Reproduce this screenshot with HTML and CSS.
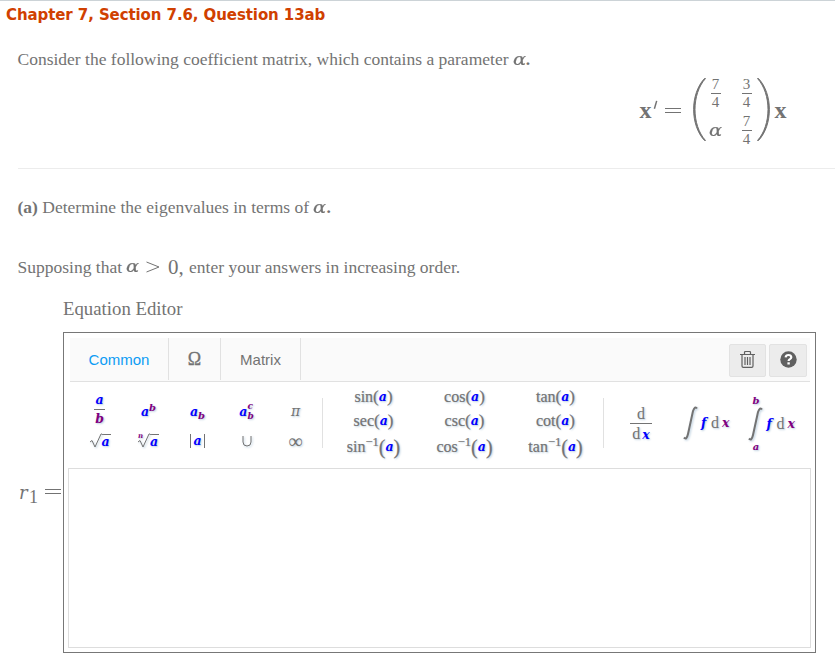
FILE: index.html
```html
<!DOCTYPE html>
<html lang="en">
<head>
  <meta charset="UTF-8">
  <meta name="viewport" content="width=device-width, initial-scale=1.0">
  <title>Chapter 7, Section 7.6, Question 13ab</title>
  <link rel="stylesheet" href="styles.css">
</head>
<body>
  <h1>Chapter 7, Section 7.6, Question 13ab</h1>
  <div class="question">
    <p class="intro">Consider the following coefficient matrix, which contains a parameter <span class="alpha">α</span><b>.</b></p>
    <div class="equation">
      <b class="vec">x</b><svg class="prime" width="13" height="10" viewBox="0 0 13 10"><path d="M4 .5L1.500 9"/></svg>
      <svg class="equals" width="16" height="7" viewBox="0 0 16 7"><path d="M0 1.5h16M0 5.5h16"/></svg>
      <svg class="paren" width="14" height="64" viewBox="0 0 14 64"><path d="M12.5 .5C-1.5 16-1.5 47 12.5 62.500L11.500 62.500C-3 47-3 16 11.500.5z" transform="translate(1 0)"/></svg>
      <div class="matrix">
        <span class="frac"><span>7</span><span>4</span></span>
        <span class="frac"><span>3</span><span>4</span></span>
        <span class="alpha">α</span>
        <span class="frac"><span>7</span><span>4</span></span>
      </div>
      <svg class="paren right" width="14" height="64" viewBox="0 0 14 64"><path d="M12.5 .5C-1.5 16-1.5 47 12.5 62.500L11.500 62.500C-3 47-3 16 11.500.5z" transform="translate(1 0)"/></svg>
      <b class="vec last">x</b>
    </div>
  </div>

  <div class="question">
    <p class="part"><b>(a)</b> Determine the eigenvalues in terms of <span class="alpha">α</span><b>.</b></p>
    <p class="suppose"><span>Supposing that</span> <span class="alpha">α</span><svg class="greater" width="14" height="12" viewBox="0 0 14 12"><path d="M.5 1L13 6 .5 11"/></svg><span class="zero">0,</span> <span>enter your answers in increasing order.</span></p>
  </div>

  <div class="answer">
    <div class="label"><i>r</i><sub>1</sub><svg class="equals" width="16" height="7" viewBox="0 0 16 7"><path d="M0 1.5h16M0 5.5h16"/></svg></div>
    <div class="editor-wrap">
      <div class="caption">Equation Editor</div>
      <div class="editor">
        <div class="toolbar">
          <div class="tab active">Common</div>
          <div class="tab omega">Ω</div>
          <div class="tab matrix-tab">Matrix</div>
          <div class="buttons">
            <div class="btn">
              <svg width="15" height="17" viewBox="0 0 15 17"><path class="line" d="M0 3.500h15M4.500 3V1.500q0-1 1-1h4q1 0 1 1V3M2 4v11q0 1.300 1.300 1.300h8.400q1.300 0 1.300-1.300V4M5 6v8M7.500 6v8M10 6v8"/></svg>
            </div>
            <div class="btn help">
              <svg width="17" height="17" viewBox="0 0 17 17"><circle cx="8.500" cy="8.500" r="8.200"/><path class="mark" d="M5.600 6.400Q6 4 8.500 4T11.300 6.200Q11.300 7.300 9.900 8.100 8.600 8.800 8.600 10"/><path class="dot" d="M7.400 11.300h2.400v2.200H7.400z"/></svg>
            </div>
          </div>
        </div>

        <div class="palette">
          <div class="group symbols">
            <div class="cell stack"><span class="v">a</span><span class="w over">b</span></div>
            <div class="cell low"><span class="v">a</span><span class="w sup">b</span></div>
            <div class="cell low"><span class="v">a</span><span class="w sub">b</span></div>
            <div class="cell low"><span class="v">a</span><span class="w both"><span>c</span><span>b</span></span></div>
            <div class="cell sym pi">π</div>
            <div class="cell"><svg class="root" width="13" height="16" viewBox="0 0 13 16"><path d="M1 9l2-1.500 3 6.500L12 1h1"/></svg><span class="v rooted">a</span></div>
            <div class="cell nth"><span class="w index">n</span><svg class="root" width="13" height="16" viewBox="0 0 13 16"><path d="M1 9l2-1.500 3 6.500L12 1h1"/></svg><span class="v rooted">a</span></div>
            <div class="cell"><span class="bar"></span><span class="v">a</span><span class="bar"></span></div>
            <div class="cell"><svg class="union" width="10" height="11" viewBox="0 0 10 11"><path d="M1 0v6q0 4 4 4t4-4V0"/></svg></div>
            <div class="cell sym infinity">∞</div>
          </div>
          <div class="group trig">
            <div class="cell">sin<span class="p">(</span><span class="v">a</span><span class="p">)</span></div>
            <div class="cell">cos<span class="p">(</span><span class="v">a</span><span class="p">)</span></div>
            <div class="cell">tan<span class="p">(</span><span class="v">a</span><span class="p">)</span></div>
            <div class="cell">sec<span class="p">(</span><span class="v">a</span><span class="p">)</span></div>
            <div class="cell">csc<span class="p">(</span><span class="v">a</span><span class="p">)</span></div>
            <div class="cell">cot<span class="p">(</span><span class="v">a</span><span class="p">)</span></div>
            <div class="cell">sin<span class="inv">−1</span><span class="p big">(</span><span class="v">a</span><span class="p big">)</span></div>
            <div class="cell">cos<span class="inv">−1</span><span class="p big">(</span><span class="v">a</span><span class="p big">)</span></div>
            <div class="cell">tan<span class="inv">−1</span><span class="p big">(</span><span class="v">a</span><span class="p big">)</span></div>
          </div>
          <div class="group calculus">
            <div class="derivative"><span>d</span><span class="over">d <span class="v">x</span></span></div>
            <div class="integral">
              <svg class="int" width="15" height="34" viewBox="0 0 15 34"><path d="M14 2.500Q12-.5 10 5L5 28Q3.500 34.500 1 31.500"/></svg>
              <span class="v">f</span><span class="d">d</span><span class="w">x</span>
            </div>
            <div class="integral definite">
              <div class="limits">
                <span class="w">b</span>
                <svg class="int" width="15" height="34" viewBox="0 0 15 34"><path d="M14 2.500Q12-.5 10 5L5 28Q3.500 34.500 1 31.500"/></svg>
                <span class="w">a</span>
              </div>
              <span class="v">f</span><span class="d">d</span><span class="w">x</span>
            </div>
          </div>
        </div>
        <div class="input"></div>
      </div>
    </div>
  </div>
</body>
</html>
```

FILE: styles.css
```css
* {
  box-sizing: border-box;
}
body {
  margin: 0;
  height: 657px;
  overflow: hidden;
  border-top: 1px solid #ccd3d7;
  background: #fff;
  color: #737373;
  font-family: "Liberation Serif", serif;
  font-size: 17.5px;
}
h1 {
  margin: 0;
  padding: 4px 0 0 6px;
  height: 30px;
  color: #d04000;
  font: bold 15px/20px "DejaVu Sans", sans-serif;
  letter-spacing: -0.09px;
}
svg {
  display: block;
  flex: none;
  fill: none;
  stroke: #737373;
}
p {
  margin: 0;
  line-height: 24px;
  white-space: nowrap;
}
.question {
  margin-left: 17.5px;
}
.question:first-of-type {
  height: 138px;
  border-bottom: 1px solid #ececec;
}
.intro {
  padding-top: 16px;
}
.alpha {
  display: inline-block;
  width: 13px;
  font: italic 16px/20px "DejaVu Serif", serif;
  -webkit-text-stroke: 0.2px #737373;
  transform: scaleX(1.22);
  transform-origin: left;
}

/* matrix equation */
.equation {
  display: flex;
  align-items: center;
  height: 64px;
  margin: 7px 0 0 622px;
}
.vec {
  width: 13px;
  font-size: 24px;
  line-height: 22px;
}
.prime {
  width: 12px;
  margin-top: -10px;
  stroke-width: 1.6;
}
.paren {
  margin-left: 11px;
}
.paren path {
  fill: #737373;
  stroke-width: 1;
}
.paren.right {
  margin-left: 0;
  transform: scaleX(-1);
}
.last {
  margin-left: 4px;
}
.matrix {
  display: grid;
  grid-template-columns: 20px 30px;
  grid-template-rows: 37px 38px;
  column-gap: 6px;
  justify-items: center;
  align-items: center;
  height: 75px;
  margin: 4px -5px 0 0;
}
.frac {
  display: flex;
  flex-direction: column;
  text-align: center;
  width: 10px;
  font-size: 15px;
  line-height: 17px;
}
.frac span + span {
  border-top: 1px solid #737373;
}

.part {
  padding-top: 26px;
}
.suppose {
  display: flex;
  align-items: center;
  padding-top: 36px;
}
.suppose .alpha {
  margin-left: 4px;
}
.greater {
  margin: 0 8px 0 7px;
}
.zero {
  width: 21px;
  font-size: 21px;
}

/* answer row */
.answer {
  display: flex;
  margin-top: 18px;
}
.label {
  display: flex;
  width: 63px;
  padding: 183px 0 0 19px;
  height: 230px;
  font-size: 23px;
  line-height: 24px;
}
.label i {
  width: 11px;
  font: italic 18px/26px "DejaVu Serif", serif;
}
.label sub {
  width: 16px;
  margin-left: -1px;
  font-size: 18px;
  line-height: 34px;
}
.label .equals {
  margin-top: 8px;
}
.editor-wrap {
  width: 753px;
}
.caption {
  height: 35px;
  font-size: 18.8px;
  line-height: 24px;
}
.editor {
  height: 321px;
  padding: 5px 4px 4px;
  border: 1px solid #777;
}
.toolbar {
  display: flex;
  height: 44px;
  margin: 0 1px 0 2px;
  border-bottom: 1px solid #e1e1e1;
  background: #fafafa;
  font: 15px/43px "Liberation Sans", Arial, sans-serif;
}
.tab {
  width: 99px;
  height: 42px;
  border-right: 1px solid #e1e1e1;
  text-align: center;
}
.tab.active {
  color: #0d9cf4;
}
.omega {
  width: 52px;
  font: 18px/42px "Liberation Serif", serif;
  -webkit-text-stroke: 0.3px #737373;
}
.matrix-tab {
  width: 80px;
}
.buttons {
  display: flex;
  gap: 3px;
  margin-left: auto;
  padding: 6px 3px 0 0;
}
.btn {
  display: flex;
  justify-content: center;
  width: 37px;
  height: 33px;
  padding-top: 6px;
  border: 1px solid #e2e2e2;
  border-radius: 2px;
  background: #ececec;
}
.help {
  width: 38px;
}
.btn .line {
  stroke: #606060;
  stroke-width: 1.2;
}
.btn circle {
  fill: #606060;
  stroke: none;
}
.btn .mark {
  stroke: #fff;
  stroke-width: 2.2;
}
.btn .dot {
  fill: #fff;
  stroke: none;
}

/* symbol palette */
.palette {
  display: flex;
  height: 86px;
  font-size: 16px;
  line-height: 18px;
  text-shadow: 1px 1px 2px #b9cddd;
}
.palette svg {
  filter: drop-shadow(1px 1px 1px #b9cddd);
}
.group {
  display: grid;
}
.cell {
  display: flex;
  align-items: center;
  justify-content: center;
}
.v,
.w {
  font-family: "DejaVu Serif", serif;
  font-style: italic;
  font-weight: bold;
  font-size: 12.5px;
}
.v {
  color: #00f;
}
.w {
  color: #800080;
}
.symbols {
  grid-template-columns: repeat(5, 49px);
  grid-template-rows: 34px 26px;
  width: 254px;
  height: 60px;
  margin-top: 12px;
  padding-left: 7px;
}
.stack {
  flex-direction: column;
}
.stack span {
  width: 11px;
  text-align: center;
}
.stack .v {
  margin-top: -4px;
}
.over {
  border-top: 1px solid #737373;
}
.low {
  padding-top: 2px;
}
.sup {
  margin-top: -9px;
  font-size: 10px;
}
.sub {
  margin-top: 7px;
  font-size: 10px;
}
.both {
  display: flex;
  flex-direction: column;
  margin-top: -2px;
  font-size: 9px;
  line-height: 10px;
}
.sym {
  font: 14px/16px "DejaVu Serif", serif;
}
.pi {
  font-style: italic;
}
.infinity {
  font: 20px/16px "Liberation Serif", serif;
}
.rooted {
  width: 9px;
  height: 15px;
  border-top: 1px solid #737373;
  line-height: 14px;
}
.index {
  margin: -10px -6px 0 0;
  font-size: 7px;
}
.bar {
  width: 1px;
  height: 14px;
  margin: 0 2px;
  background: #737373;
}
.trig {
  grid-template-columns: repeat(3, 91px);
  grid-template-rows: 24px 24px 27px;
  width: 281px;
  height: 75px;
  margin-top: 3px;
  padding-left: 6px;
  background: linear-gradient(#e1e1e1, #e1e1e1) 0 13px / 1px 50px no-repeat;
}
.trig .cell {
  -webkit-text-stroke: 0.2px #737373;
}
.trig .v {
  -webkit-text-stroke: 0;
}
.p {
  font-size: 17px;
}
.big {
  font-size: 20px;
}
.inv {
  margin-top: -9px;
  font-size: 12.5px;
}
.calculus {
  display: flex;
  width: 208px;
  background: linear-gradient(#e1e1e1, #e1e1e1) 0 16px / 1px 50px no-repeat;
}
.derivative {
  display: flex;
  flex-direction: column;
  width: 22px;
  margin: 22px 0 0 27px;
  text-align: center;
  line-height: 19px;
  white-space: nowrap;
  word-spacing: -2px;
}
.integral {
  display: flex;
  align-items: center;
  height: 34px;
  margin: 24px 0 0 31px;
}
.integral > .v {
  width: 8px;
  margin-left: 3px;
}
.integral .d {
  margin: 0 3px 0 2px;
}
.int path {
  stroke-width: 2;
}
.definite {
  margin: 25px 0 0 19px;
}
.limits {
  display: flex;
  flex-direction: column;
  align-items: center;
}
.limits .w {
  font-size: 10px;
  line-height: 12px;
}
.input {
  height: 180px;
  border: 1px solid #ddd;
}
```
